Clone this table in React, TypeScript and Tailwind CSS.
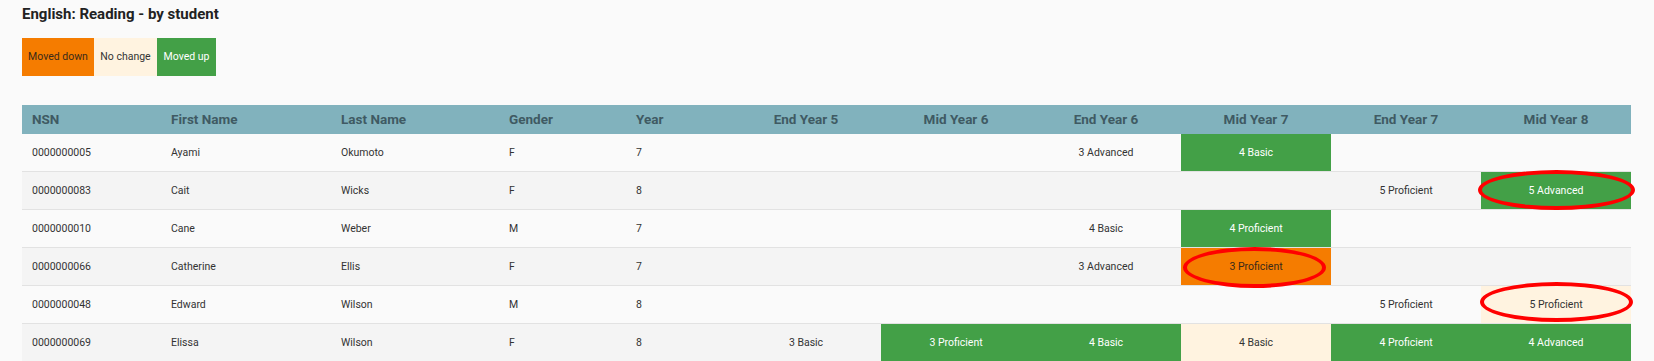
import React from 'react'

type Mark = 'down' | 'same' | 'up' | null

interface Grade {
  text: string
  mark?: Mark
  ring?: string
}

interface Student {
  nsn: string
  first: string
  last: string
  gender: string
  year: string
  grades: (Grade | null)[]
}

const cols = 'grid grid-cols-[139px_170px_168px_127px_105px_150px_150px_150px_150px_150px_150px]'

const students: Student[] = [
  {
    nsn: '0000000005', first: 'Ayami', last: 'Okumoto', gender: 'F', year: '7',
    grades: [null, null, { text: '3 Advanced' }, { text: '4 Basic', mark: 'up' }, null, null],
  },
  {
    nsn: '0000000083', first: 'Cait', last: 'Wicks', gender: 'F', year: '8',
    grades: [null, null, null, null, { text: '5 Proficient' }, { text: '5 Advanced', mark: 'up', ring: 'left-[-3px] top-[-2px] w-[157px] h-[40px]' }],
  },
  {
    nsn: '0000000010', first: 'Cane', last: 'Weber', gender: 'M', year: '7',
    grades: [null, null, { text: '4 Basic' }, { text: '4 Proficient', mark: 'up' }, null, null],
  },
  {
    nsn: '0000000066', first: 'Catherine', last: 'Ellis', gender: 'F', year: '7',
    grades: [null, null, { text: '3 Advanced' }, { text: '3 Proficient', mark: 'down', ring: 'left-[2px] top-[-1px] w-[143px] h-[41px]' }, null, null],
  },
  {
    nsn: '0000000048', first: 'Edward', last: 'Wilson', gender: 'M', year: '8',
    grades: [null, null, null, null, { text: '5 Proficient' }, { text: '5 Proficient', mark: 'same', ring: 'left-[-1px] top-[-4px] w-[153px] h-[40px]' }],
  },
  {
    nsn: '0000000069', first: 'Elissa', last: 'Wilson', gender: 'F', year: '8',
    grades: [
      { text: '3 Basic' },
      { text: '3 Proficient', mark: 'up' },
      { text: '4 Basic', mark: 'up' },
      { text: '4 Basic', mark: 'same' },
      { text: '4 Proficient', mark: 'up' },
      { text: '4 Advanced', mark: 'up' },
    ],
  },
]

const headers = ['NSN', 'First Name', 'Last Name', 'Gender', 'Year']
const periods = ['End Year 5', 'Mid Year 6', 'End Year 6', 'Mid Year 7', 'End Year 7', 'Mid Year 8']

function markClass(mark?: Mark) {
  if (mark === 'up') return 'bg-[#43a047] text-white'
  if (mark === 'down') return 'bg-[#f57c00] text-[#3a2a1a]'
  if (mark === 'same') return 'bg-[#fff3e0] text-[#333]'
  return 'text-[#333]'
}

export default function App() {
  return (
    <div className="min-h-[361px] bg-[#fafafa] px-[22px] pt-[4px] font-['Roboto',sans-serif] overflow-hidden">
      <h2 className="text-[15px] leading-[20px] font-bold text-[#222]">English: Reading - by student</h2>

      {/* Legend */}
      <div className="mt-[14px] flex h-[38px] text-[10.5px]">
        <div className="flex w-[72px] items-center justify-center bg-[#f57c00] text-[#3a2a1a]">Moved down</div>
        <div className="flex w-[63px] items-center justify-center bg-[#fff3e0] text-[#333]">No change</div>
        <div className="flex w-[59px] items-center justify-center bg-[#43a047] text-white">Moved up</div>
      </div>

      {/* Table */}
      <div className="mt-[29px] w-[1609px]">
        <div className={`${cols} h-[29px] items-center bg-[#81b2bd] text-[13.5px] font-bold text-[#3f5a63]`}>
          {headers.map((h) => (
            <div key={h} className="pl-[10px]">{h}</div>
          ))}
          {periods.map((p) => (
            <div key={p} className="text-center">{p}</div>
          ))}
        </div>

        {students.map((s, i) => (
          <div
            key={s.nsn}
            className={`${cols} h-[38px] border-b border-[#e2e2e2] text-[10.5px] text-[#333] ${i % 2 === 1 ? 'bg-[#f4f4f4]' : 'bg-[#fafafa]'}`}
          >
            {[s.nsn, s.first, s.last, s.gender, s.year].map((v, j) => (
              <div key={j} className="flex items-center pl-[10px]">{v}</div>
            ))}
            {s.grades.map((g, j) => (
              <div key={j} className={`relative flex items-center justify-center ${markClass(g?.mark)}`}>
                {g?.text}
                {g?.ring && (
                  <div className={`absolute rounded-[50%] border-[4px] border-[#ff0000] ${g.ring}`} />
                )}
              </div>
            ))}
          </div>
        ))}
      </div>
    </div>
  )
}
